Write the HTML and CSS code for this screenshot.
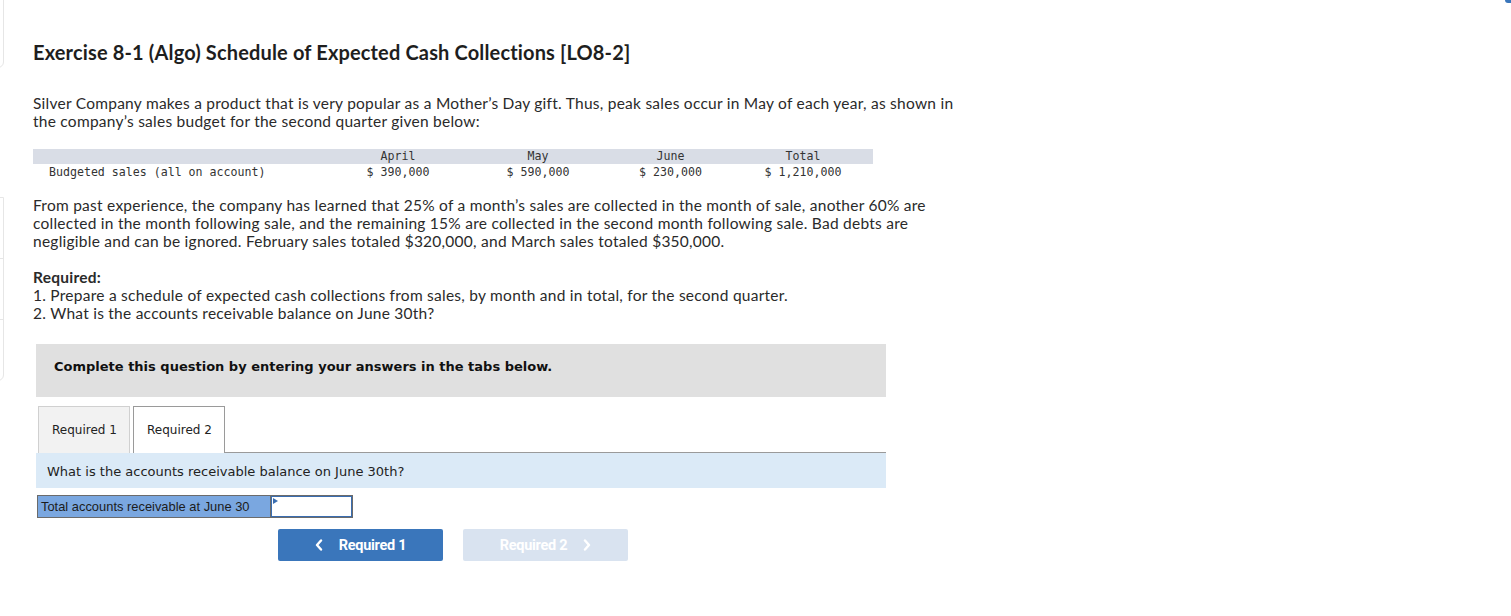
FILE: index.html
```html
<!DOCTYPE html>
<html lang="en">
<head>
<meta charset="utf-8">
<title>Exercise 8-1</title>
<link rel="stylesheet" href="styles.css">
</head>
<body>
<div class="side-box side-top"></div>
<div class="side-box side-list">
  <div class="side-item"></div>
  <div class="side-item"></div>
  <div class="side-item last"></div>
</div>
<div class="corner-mark"></div>

<main class="page">
  <h1 class="title">Exercise 8-1 (Algo) Schedule of Expected Cash Collections [LO8-2]</h1>
  <p class="para">Silver Company makes a product that is very popular as a Mother’s Day gift. Thus, peak sales occur in May of each year, as shown in the company’s sales budget for the second quarter given below:</p>

  <div class="budget">
    <div class="budget-row head">
      <span></span><span>April</span><span>May</span><span>June</span><span>Total</span>
    </div>
    <div class="budget-row data">
      <span class="label">Budgeted sales (all on account)</span><span>$ 390,000</span><span>$ 590,000</span><span>$ 230,000</span><span>$ 1,210,000</span>
    </div>
  </div>

  <p class="para second">From past experience, the company has learned that 25% of a month’s sales are collected in the month of sale, another 60% are collected in the month following sale, and the remaining 15% are collected in the second month following sale. Bad debts are negligible and can be ignored. February sales totaled $320,000, and March sales totaled $350,000.</p>

  <div class="required">
    <strong>Required:</strong><br>
    1. Prepare a schedule of expected cash collections from sales, by month and in total, for the second quarter.<br>
    2. What is the accounts receivable balance on June 30th?
  </div>

  <div class="banner">Complete this question by entering your answers in the tabs below.</div>

  <div class="tabs">
    <div class="tab">Required 1</div>
    <div class="tab active">Required 2</div>
    <div class="tab-fill"></div>
  </div>

  <div class="prompt">What is the accounts receivable balance on June 30th?</div>

  <div class="answer-row">
    <div class="answer-label">Total accounts receivable at June 30</div>
    <div class="answer-input"><span class="flag"></span></div>
  </div>

  <div class="nav">
    <button class="nav-btn primary"><svg class="chev" width="8" height="12" viewBox="0 0 8 12"><polyline points="6,1.5 2,6 6,10.5" fill="none" stroke="#fff" stroke-width="2.4" stroke-linecap="round" stroke-linejoin="round"/></svg>Required 1</button>
    <button class="nav-btn disabled">Required 2<svg class="chev right" width="8" height="12" viewBox="0 0 8 12"><polyline points="2,1.5 6,6 2,10.5" fill="none" stroke="#fff" stroke-width="2.4" stroke-linecap="round" stroke-linejoin="round"/></svg></button>
  </div>
</main>
</body>
</html>
```

FILE: styles.css
```css
html, body {
  margin: 0;
  padding: 0;
  background: #ffffff;
}

body {
  font-family: "Lato", "Open Sans", sans-serif;
  color: #222;
  width: 1511px;
  height: 616px;
  overflow: hidden;
  position: relative;
}

.side-box {
  position: absolute;
  left: -20px;
  width: 24px;
  border: 1px solid #e6e6e6;
  border-radius: 0 0 6px 0;
  box-sizing: border-box;
}

.side-top {
  top: -4px;
  height: 72px;
}

.side-list {
  top: 197px;
  height: 184px;
  display: flex;
  flex-direction: column;
}

.side-item {
  flex: 1;
  border-bottom: 1px solid #e6e6e6;
}

.side-item.last {
  border-bottom: none;
}

.corner-mark {
  position: absolute;
  top: -3px;
  right: -2px;
  width: 8px;
  height: 6px;
  border-radius: 3px;
  background: #3a76bb;
}

.page {
  padding: 40px 0 0 33px;
  width: 925px;
}

.title {
  margin: 0;
  font-size: 20px;
  line-height: 24px;
  font-weight: 700;
  letter-spacing: 0.15px;
  color: #1e1e1e;
}

.para {
  margin: 30px 0 0;
  font-size: 15.5px;
  line-height: 18px;
  letter-spacing: 0.25px;
  color: #2a2a2a;
}

.para.second {
  margin-top: 15px;
}

.budget {
  margin-top: 19px;
  width: 840px;
  font-family: "DejaVu Sans Mono", "Liberation Mono", monospace;
  font-size: 11.6px;
  color: #333;
}

.budget-row {
  display: grid;
  grid-template-columns: 295px 140px 140px 125px 140px;
  height: 15px;
  line-height: 15px;
  text-align: center;
}

.budget-row.head {
  background: #d9dde6;
}

.budget-row.data {
  height: 17px;
  line-height: 17px;
}

.budget-row .label {
  text-align: left;
  padding-left: 16px;
}

.required {
  margin-top: 18px;
  font-size: 15.5px;
  line-height: 18px;
  letter-spacing: 0.25px;
  color: #2a2a2a;
}

.required strong {
  font-weight: 700;
}

.banner {
  margin: 22px 0 0 3px;
  width: 850px;
  height: 53px;
  box-sizing: border-box;
  padding: 15px 0 0 18px;
  background: #e0e0e0;
  font-family: "DejaVu Sans", sans-serif;
  font-weight: 700;
  font-size: 13px;
  line-height: 16px;
  color: #111;
}

.tabs {
  margin: 8px 0 0 3px;
  width: 850px;
  display: flex;
  align-items: flex-end;
  height: 48px;
}

.tab {
  box-sizing: border-box;
  width: 92px;
  height: 47px;
  margin-left: 2px;
  padding: 16px 0 0 13px;
  background: #f2f2f2;
  border: 1px solid #d0d0d0;
  border-bottom: none;
  font-family: "DejaVu Sans", sans-serif;
  font-size: 12px;
  line-height: 15px;
  color: #222;
}

.tab.active {
  margin-left: 3px;
  height: 47px;
  background: #fff;
  border: 1px solid #9a9a9a;
  border-bottom: none;
}

.tab-fill {
  flex: 1;
  height: 0;
  border-bottom: 1px solid #9a9a9a;
}

.prompt {
  margin-left: 3px;
  width: 850px;
  height: 35px;
  box-sizing: border-box;
  padding: 11px 0 0 11px;
  background: #dbeaf7;
  font-family: "DejaVu Sans", sans-serif;
  font-size: 13px;
  line-height: 15px;
  color: #222;
}

.answer-row {
  margin: 7px 0 0 4px;
  display: flex;
  height: 23px;
}

.answer-label {
  box-sizing: border-box;
  width: 233px;
  height: 23px;
  padding: 3px 0 0 3px;
  background: #7aa7e0;
  border: 1px solid #6b6b6b;
  border-right: none;
  font-family: "Liberation Sans", Arial, sans-serif;
  font-size: 12.9px;
  line-height: 16px;
  color: #1c1c1c;
}

.answer-input {
  position: relative;
  box-sizing: border-box;
  width: 83px;
  height: 23px;
  border: 1px solid #6b6b6b;
  background: #fff;
  box-shadow: inset 0 0 0 1px #3a6db0;
}

.flag {
  position: absolute;
  left: 2px;
  top: 2px;
  width: 0;
  height: 0;
  border-top: 3px solid transparent;
  border-bottom: 3px solid transparent;
  border-left: 5px solid #3a6db0;
}

.nav {
  margin: 11px 0 0 245px;
  display: flex;
  gap: 20px;
}

.nav-btn {
  box-sizing: border-box;
  width: 165px;
  height: 32px;
  border: none;
  border-radius: 2px;
  font-family: "Roboto", "Liberation Sans", sans-serif;
  font-weight: 700;
  font-size: 14.5px;
  letter-spacing: -0.3px;
  color: #fff;
  display: flex;
  align-items: center;
  justify-content: center;
  padding: 0;
}

.nav-btn.primary {
  background: #3a76bb;
}

.nav-btn.disabled {
  background: #d9e3f0;
}

.chev {
  display: block;
  margin-right: 16px;
}

.chev.right {
  margin-right: 0;
  margin-left: 16px;
}
```
